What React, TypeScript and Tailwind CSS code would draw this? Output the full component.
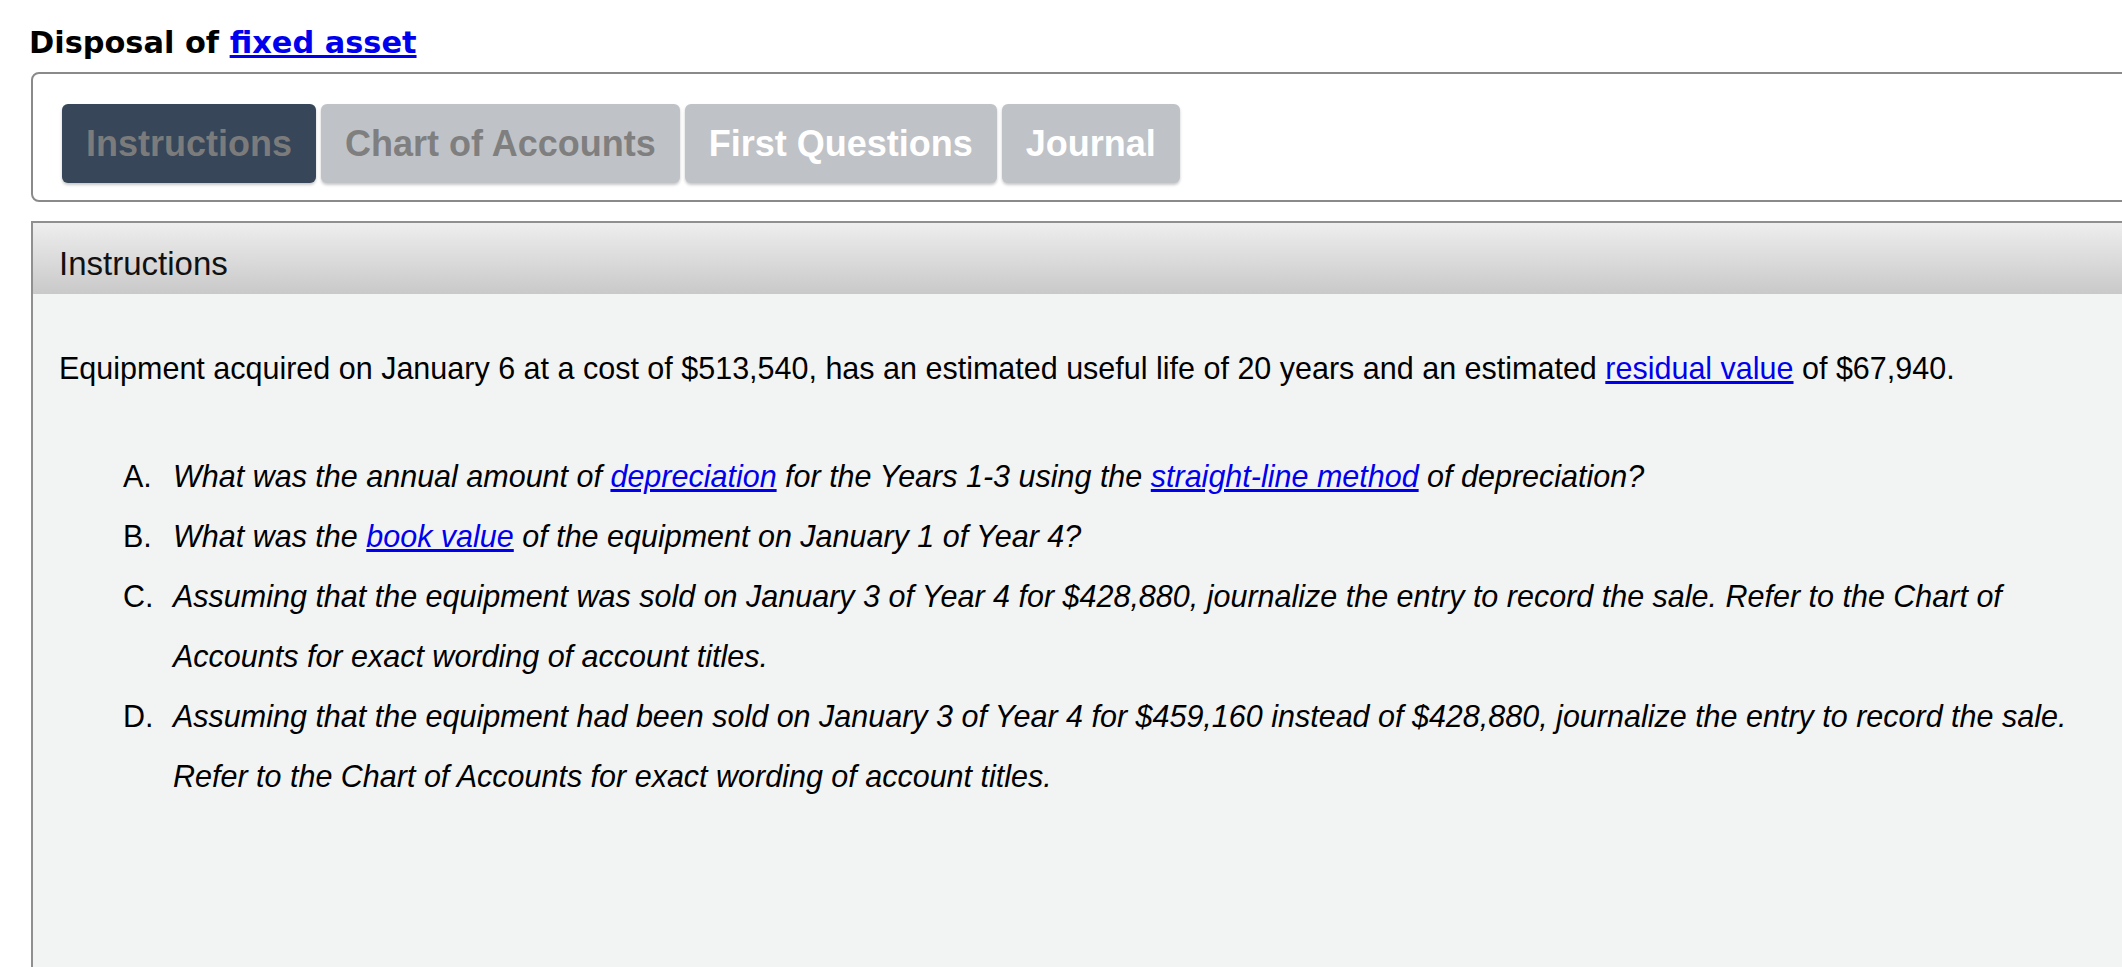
import React from "react";

const sans = { fontFamily: '"Liberation Sans", Arial, Helvetica, sans-serif' };

function Tab({ label, active, textClass }: { label: string; active?: boolean; textClass: string }) {
  return (
    <div
      className={
        "h-[79px] px-[24px] rounded-[6px] text-[36px] font-bold leading-[79px] whitespace-nowrap shadow-[0_2px_3px_rgba(0,0,0,0.22)] " +
        (active ? "bg-[#374659] " : "bg-[#bfc3c7] ") +
        textClass
      }
    >
      {label}
    </div>
  );
}

function A({ children }: { children: React.ReactNode }) {
  return <a href="#" className="text-[#0000ee] underline">{children}</a>;
}

function Item({ letter, children }: { letter: string; children: React.ReactNode }) {
  return (
    <div className="flex">
      <span className="w-[50px] shrink-0">{letter}</span>
      <span className="w-[1935px] italic">{children}</span>
    </div>
  );
}

export default function App() {
  return (
    <div className="w-[2122px] h-[967px] overflow-hidden bg-white text-black flex flex-col" style={sans}>
      <div
        className="pl-[29px] pt-[25px] text-[30.4px] font-bold leading-[36px]"
        style={{ fontFamily: '"DejaVu Sans", Verdana, sans-serif' }}
      >
        Disposal of <a href="#" className="text-[#0000ee] underline">fixed asset</a>
      </div>

      <div className="mt-[11px] ml-[31px] w-[2200px] shrink-0 border-2 border-[#8a8a8a] rounded-[8px] pt-[30px] pb-[17px] pl-[29px] flex gap-[5px]">
        <Tab label="Instructions" active textClass="text-[#7b7b7b]" />
        <Tab label="Chart of Accounts" textClass="text-[#7f7f7f]" />
        <Tab label="First Questions" textClass="text-white" />
        <Tab label="Journal" textClass="text-white" />
      </div>

      <div className="mt-[19px] ml-[31px] w-[2200px] flex-1 flex flex-col border-t-2 border-l-2 border-[#8f8f8f]">
        <div className="h-[71px] shrink-0 bg-gradient-to-b from-[#eeeeee] to-[#c9c9c9] pl-[26px] pt-[10px] text-[33px] leading-[61px] text-[#111]">
          Instructions
        </div>
        <div className="flex-1 bg-[#f2f3f3] pl-[26px] pt-[44px] text-[30.5px] leading-[60px]">
          <p>
            Equipment acquired on January 6 at a cost of $513,540, has an estimated useful life of 20 years and an
            estimated <A>residual value</A> of $67,940.
          </p>
          <div className="mt-[48px] pl-[64px]">
            <Item letter="A.">
              What was the annual amount of <A>depreciation</A> for the Years 1-3 using the{" "}
              <A>straight-line method</A> of depreciation?
            </Item>
            <Item letter="B.">
              What was the <A>book value</A> of the equipment on January 1 of Year 4?
            </Item>
            <Item letter="C.">
              Assuming that the equipment was sold on January 3 of Year 4 for $428,880, journalize the entry to record
              the sale. Refer to the Chart of Accounts for exact wording of account titles.
            </Item>
            <Item letter="D.">
              Assuming that the equipment had been sold on January 3 of Year 4 for $459,160 instead of $428,880,
              journalize the entry to record the sale. Refer to the Chart of Accounts for exact wording of account
              titles.
            </Item>
          </div>
        </div>
      </div>
    </div>
  );
}
